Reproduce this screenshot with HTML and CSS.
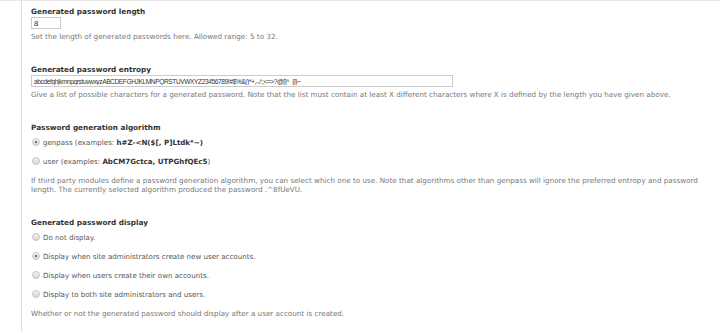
FILE: index.html
```html
<!DOCTYPE html>
<html>

<head>
  <link rel="stylesheet" href="styles.css">
</head>

<body>

  <div class="panel">

    <div class="form-item">
      <label class="title">Generated password length</label>
      <input type="text" class="form-text short" value="8">
      <div class="description">Set the length of generated passwords here. Allowed range: 5 to 32.</div>
    </div>

    <div class="form-item">
      <label class="title">Generated password entropy</label>
      <input type="text" class="form-text long" value="abcdefghjkmnpqrstuvwxyzABCDEFGHJKLMNPQRSTUVWXYZ23456789!#$%&amp;()*+,-./:;&lt;=&gt;?@[]^_{|}~">
      <div class="description">Give a list of possible characters for a generated password. Note that the list must contain at least X different characters where X is defined by the length you have given above.</div>
    </div>

    <div class="form-item">
      <label class="title">Password generation algorithm</label>
      <div class="radios">
        <div class="radio"><span class="dot checked"></span>genpass (examples: <b>h#Z-&lt;N($[, P]Ltdk*~)</b></div>
        <div class="radio"><span class="dot"></span>user (examples: <b>AbCM7Gctca, UTPGhfQEc5</b>)</div>
      </div>
      <div class="description">If third party modules define a password generation algorithm, you can select which one to use. Note that algorithms other than genpass will ignore the preferred entropy and password length. The currently selected algorithm produced the password .^8fUeVU.</div>
    </div>

    <div class="form-item">
      <label class="title">Generated password display</label>
      <div class="radios">
        <div class="radio"><span class="dot"></span>Do not display.</div>
        <div class="radio"><span class="dot checked"></span>Display when site administrators create new user accounts.</div>
        <div class="radio"><span class="dot"></span>Display when users create their own accounts.</div>
        <div class="radio"><span class="dot"></span>Display to both site administrators and users.</div>
      </div>
      <div class="description">Whether or not the generated password should display after a user account is created.</div>
    </div>

  </div>

</body>

</html>
```

FILE: styles.css
```css
* {
  box-sizing: border-box;
}

body {
  margin: 0;
  background: #fff;
  font-family: "DejaVu Sans", Verdana, sans-serif;
  color: #333;
  border-top: 1px solid #e8e8e8;
}

.panel {
  margin-left: 21px;
  border-left: 1px solid #ddd;
  padding: 5px 0 4px 9px;
  height: 330px;
}

.form-item {
  margin-bottom: 23px;
}

.title {
  display: block;
  font-weight: bold;
  font-size: 7.3px;
  line-height: 11px;
  color: #333;
}

.form-text {
  display: block;
  height: 12px;
  border: 1px solid #ccc;
  padding: 0 2px;
  font-family: "Liberation Sans", Arial, sans-serif;
  color: #333;
  margin: 0;
}

.short {
  width: 30px;
  font-size: 8px;
}

.long {
  width: 422px;
  font-size: 6.6px;
  letter-spacing: -0.4px;
}

.description {
  font-size: 7.2px;
  line-height: 9px;
  color: #777;
  margin-top: 3px;
  width: 685px;
}

.radios {
  padding-top: 5px;
  margin-bottom: 1px;
}

.radio {
  font-size: 7.1px;
  line-height: 10px;
  color: #555;
  margin: 0 0 9px 1px;
}

.radio b {
  color: #333;
}

.dot {
  display: inline-block;
  vertical-align: -1px;
  width: 8px;
  height: 8px;
  border-radius: 50%;
  border: 1px solid #c4c4c4;
  background: linear-gradient(#f4f4f4, #d8d8d8);
  margin-right: 3px;
  position: relative;
}

.dot.checked:after {
  content: "";
  position: absolute;
  left: 2px;
  top: 2px;
  width: 2px;
  height: 2px;
  border-radius: 50%;
  background: #444;
}
```
